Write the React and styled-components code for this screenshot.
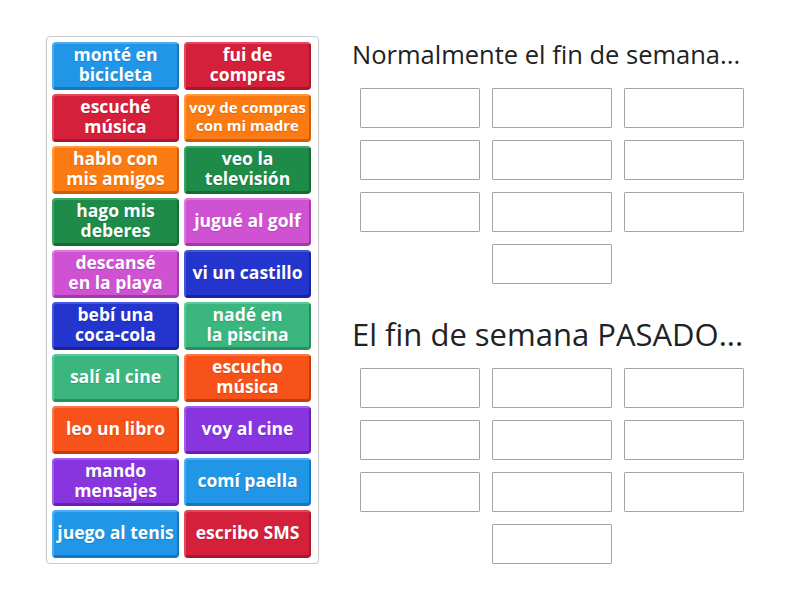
import React from "react";
import styled, { createGlobalStyle } from "styled-components";

const Global = createGlobalStyle`
  html, body { margin: 0; padding: 0; background: #fff; }
  body { font-family: "Open Sans", "Noto Sans", sans-serif; }
`;

const COLORS = {
  blue: { bg: "#2196e6", top: "#4aaef2", bot: "#1676c2" },
  red: { bg: "#d5203b", top: "#e4475e", bot: "#a8172d" },
  orange: { bg: "#fb7a12", top: "#ff9a40", bot: "#cf5e08" },
  green: { bg: "#1f8b49", top: "#3aa662", bot: "#156a36" },
  pink: { bg: "#cf52d3", top: "#de78e0", bot: "#a639aa" },
  navy: { bg: "#2335cc", top: "#4555dc", bot: "#17249c" },
  teal: { bg: "#3bb67f", top: "#5cc998", bot: "#288f60" },
  flame: { bg: "#f7521a", top: "#ff7646", bot: "#c63c0c" },
  purple: { bg: "#8835df", top: "#a05cea", bot: "#6422b0" },
};

const TILES = [
  ["monté en bicicleta", "blue"],
  ["fui de compras", "red"],
  ["escuché música", "red"],
  ["voy de compras con mi madre", "orange", true],
  ["hablo con mis amigos", "orange"],
  ["veo la televisión", "green"],
  ["hago mis deberes", "green"],
  ["jugué al golf", "pink"],
  ["descansé en la playa", "pink"],
  ["vi un castillo", "navy"],
  ["bebí una coca-cola", "navy"],
  ["nadé en la piscina", "teal"],
  ["salí al cine", "teal"],
  ["escucho música", "flame"],
  ["leo un libro", "flame"],
  ["voy al cine", "purple"],
  ["mando mensajes", "purple"],
  ["comí paella", "blue"],
  ["juego al tenis", "blue"],
  ["escribo SMS", "red"],
];

const BREAKS = {
  "monté en bicicleta": ["monté en", "bicicleta"],
  "fui de compras": ["fui de", "compras"],
  "escuché música": ["escuché", "música"],
  "voy de compras con mi madre": ["voy de compras", "con mi madre"],
  "hablo con mis amigos": ["hablo con", "mis amigos"],
  "veo la televisión": ["veo la", "televisión"],
  "hago mis deberes": ["hago mis", "deberes"],
  "descansé en la playa": ["descansé", "en la playa"],
  "bebí una coca-cola": ["bebí una", "coca-cola"],
  "nadé en la piscina": ["nadé en", "la piscina"],
  "escucho música": ["escucho", "música"],
  "mando mensajes": ["mando", "mensajes"],
};

const Page = styled.div`
  display: flex;
  align-items: flex-start;
  padding: 36px 0 0 46px;
  gap: 33px;
`;

const Bank = styled.div`
  width: 260px;
  padding: 5px 6px 5px 5px;
  border: 1px solid #c9c9c9;
  border-radius: 4px;
  box-shadow: 0 1px 2px rgba(0, 0, 0, 0.08);
  display: grid;
  grid-template-columns: 127px 127px;
  column-gap: 5px;
  row-gap: 4px;
`;

const Tile = styled.div`
  box-sizing: border-box;
  height: 48px;
  padding-bottom: 3px;
  border-radius: 4px;
  background: ${(p) => COLORS[p.$c].bg};
  border-top: 2px solid ${(p) => COLORS[p.$c].top};
  border-bottom: 3px solid ${(p) => COLORS[p.$c].bot};
  border-left: 2px solid ${(p) => COLORS[p.$c].top};
  border-right: 2px solid ${(p) => COLORS[p.$c].bot};
  display: flex;
  flex-direction: column;
  align-items: center;
  justify-content: center;
  color: #fff;
  font-weight: 700;
  font-size: ${(p) => (p.$small ? "15px" : "17.5px")};
  line-height: ${(p) => (p.$small ? "18px" : "20px")};
  text-align: center;
  white-space: nowrap;
  text-shadow: 0 1px 1px rgba(0, 0, 0, 0.15);
`;

const Line = styled.span`
  display: block;
`;

const Right = styled.div`
  width: 400px;
  display: flex;
  flex-direction: column;
`;

const Group = styled.section`
  display: flex;
  flex-direction: column;
  margin-bottom: ${(p) => p.$mb || 0}px;
`;

const Heading = styled.h2`
  margin: 0 0 12px 0;
  height: 40px;
  display: flex;
  align-items: center;
  font-weight: 400;
  font-size: ${(p) => p.$size}px;
  color: #222;
  white-space: nowrap;
  position: relative;
  top: -2px;
`;

const Slots = styled.div`
  display: grid;
  grid-template-columns: repeat(3, 120px);
  gap: 12px;
  justify-content: center;
`;

const Slot = styled.div`
  box-sizing: border-box;
  height: 40px;
  border: 1px solid #a4a4a4;
  border-radius: 1px;
  background: #fff;
  grid-column: ${(p) => (p.$center ? "2" : "auto")};
`;

function SlotGroup() {
  return (
    <Slots>
      {Array.from({ length: 9 }).map((_, i) => (
        <Slot key={i} />
      ))}
      <Slot $center />
    </Slots>
  );
}

export default function App() {
  return (
    <>
      <Global />
      <Page>
        <Bank>
          {TILES.map(([t, c, small]) => (
            <Tile key={t} $c={c} $small={small}>
              {(BREAKS[t] || [t]).map((l) => (
                <Line key={l}>{l}</Line>
              ))}
            </Tile>
          ))}
        </Bank>
        <Right>
          <Group $mb={32}>
            <Heading $size={25.5}>Normalmente el fin de semana...</Heading>
            <SlotGroup />
          </Group>
          <Group>
            <Heading $size={31}>El fin de semana PASADO...</Heading>
            <SlotGroup />
          </Group>
        </Right>
      </Page>
    </>
  );
}
